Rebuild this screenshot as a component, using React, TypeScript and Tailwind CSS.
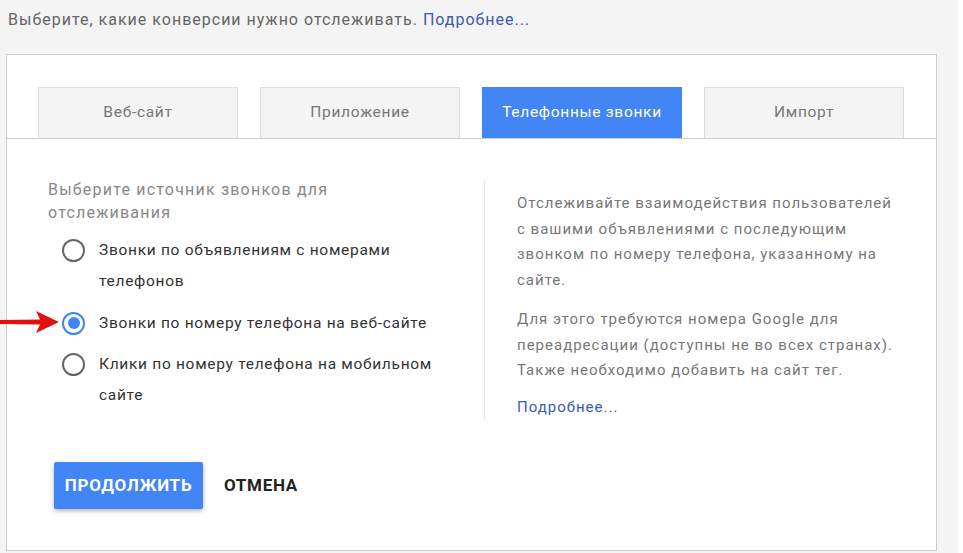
import React from 'react';

const tabs = ['Веб-сайт', 'Приложение', 'Телефонные звонки', 'Импорт'];

const options = [
  { label: 'Звонки по объявлениям с номерами телефонов', checked: false },
  { label: 'Звонки по номеру телефона на веб-сайте', checked: true },
  { label: 'Клики по номеру телефона на мобильном сайте', checked: false },
];

function Radio({ checked }: { checked: boolean }) {
  return (
    <span
      className={
        'mt-[4px] flex h-[23px] w-[23px] shrink-0 items-center justify-center rounded-full border-2 ' +
        (checked ? 'border-[#4285f4]' : 'border-[#666]')
      }
    >
      {checked && <span className="h-[12px] w-[12px] rounded-full bg-[#4285f4]" />}
    </span>
  );
}

export default function App() {
  return (
    <div
      className="relative min-h-screen w-[958px] bg-[#f4f4f4] pt-[9px]"
      style={{ fontFamily: 'Roboto, "Noto Sans", sans-serif' }}
    >
      <p className="pl-[8px] text-[16px] leading-[22px] tracking-[1px] text-[#666]">
        Выберите, какие конверсии нужно отслеживать.{' '}
        <a className="text-[#3a5bb0]">Подробнее...</a>
      </p>

      <div className="ml-[6px] mt-[23px] h-[497px] w-[931px] border border-[#ccc] bg-white">
        {/* tabs */}
        <div className="flex gap-[22px] border-b border-[#ccc] pl-[31px] pt-[32px]">
          {tabs.map((t, i) => {
            const active = i === 2;
            return (
              <div
                key={t}
                className={
                  'flex h-[51px] w-[200px] items-center justify-center text-[15.5px] tracking-[0.7px] ' +
                  (active
                    ? 'bg-[#4285f4] text-white'
                    : 'border-x border-t border-[#ddd] bg-[#f4f4f4] text-[#777]')
                }
              >
                {t}
              </div>
            );
          })}
        </div>

        {/* content */}
        <div className="flex pt-[39px]">
          <div className="w-[477px] pl-[41px]">
            <p className="w-[345px] text-[16px] leading-[23px] tracking-[1.2px] text-[#888]">
              Выберите источник звонков для отслеживания
            </p>
            <div className="mt-[11px] flex flex-col gap-[10.5px] pl-[14px]">
              {options.map((o) => (
                <label key={o.label} className="flex gap-[14px]">
                  <Radio checked={o.checked} />
                  <span className="w-[345px] text-[15.5px] leading-[31px] tracking-[0.7px] text-[#333]">
                    {o.label}
                  </span>
                </label>
              ))}
            </div>
          </div>

          <div className="mt-[2px] h-[240px] w-px bg-[#e2e2e2]" />

          <div className="w-[415px] pl-[32px] pt-[13px] text-[15px] leading-[25.5px] tracking-[1px] text-[#777]">
            <p>
              Отслеживайте взаимодействия пользователей с вашими объявлениями с последующим
              звонком по номеру телефона, указанному на сайте.
            </p>
            <p className="mt-[14px]">
              Для этого требуются номера Google для переадресации (доступны не во всех странах).
              Также необходимо добавить на сайт тег.
            </p>
            <a className="mt-[11px] block text-[#3a5bb0]">Подробнее...</a>
          </div>
        </div>

        {/* actions */}
        <div className="mt-[42px] flex items-center gap-[21px] pl-[47px]">
          <button className="h-[47px] w-[149px] rounded-[2px] bg-[#4285f4] text-[17px] font-bold tracking-[0.7px] text-white shadow-[0_2px_4px_rgba(0,0,0,0.3)]">
            ПРОДОЛЖИТЬ
          </button>
          <button className="text-[17px] font-bold tracking-[0.7px] text-[#222]">ОТМЕНА</button>
        </div>
      </div>

      {/* red pointer arrow */}
      <svg className="absolute left-0 top-[309px]" width="60" height="26" viewBox="0 0 60 26">
        <path d="M0 11 L40 10.5 L36 2 L59 13 L36 24 L40 15.5 L0 15 Z" fill="#e3100f" />
      </svg>
    </div>
  );
}
